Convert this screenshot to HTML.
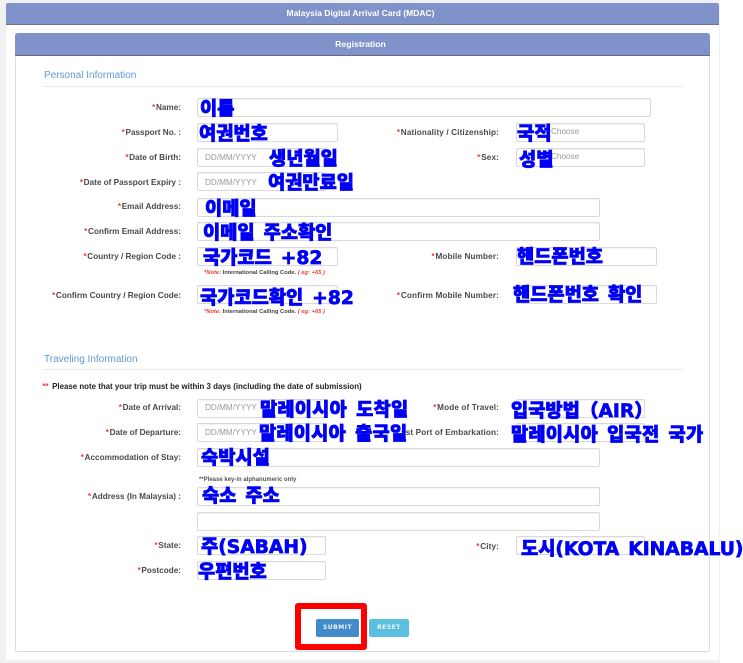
<!DOCTYPE html>
<html lang="ko"><head><meta charset="utf-8"><title>MDAC</title>
<style>
*{box-sizing:border-box}
html,body{margin:0;padding:0;width:743px;height:663px;overflow:hidden;background:#fff}
body{font-family:"Liberation Sans","Noto Sans CJK KR",sans-serif;position:relative;filter:blur(.3px)}
div,span{position:absolute}
.bg{left:0;top:0;width:720px;height:663px;background:#f1f1f1}
.outer{left:6px;top:3px;width:713px;height:657px;background:#fff}
.h1{left:6px;top:3px;width:713px;height:22px;background:#7f92ca;border-bottom:1px solid #6d7482;color:#fff;font:bold 8.5px/21px "Liberation Sans",sans-serif;text-align:center;border-radius:2px 2px 0 0;padding-right:4px}
.inner{left:15px;top:33px;width:695px;height:619px;background:#fff;border:1px solid #ddd;border-top:0;border-radius:2px}
.h2{left:15px;top:33px;width:695px;height:23px;background:#7f92ca;border-bottom:1px solid #666c78;color:#fff;font:bold 8.7px/22px "Liberation Sans",sans-serif;text-align:center;border-radius:3px 3px 0 0;padding-right:4px}
.sec{left:44px;color:#5f9bd4;font:10px/14px "Liberation Sans",sans-serif;white-space:nowrap}
.hr{left:44px;width:639px;height:1px;background:#e8e8e8}
.i{background:#fff;border:1px solid #d9d9d9;border-radius:2px;height:19px;box-shadow:inset 0 1px 1px rgba(0,0,0,.05)}
.ph{color:#9a9a9a;font:8.2px/12px "Liberation Sans",sans-serif;white-space:nowrap}
.l{color:#4a4a4a;font:bold 8.2px/12px "Liberation Sans",sans-serif;white-space:nowrap;text-align:right;letter-spacing:.12px}
.l b{color:#e9413e;font-style:italic;margin-right:1px}
.ll{letter-spacing:0}
.n{left:204px;font:bold 5.8px/8px "Liberation Sans",sans-serif;color:#444;white-space:nowrap}
.n i{color:#e9413e}
.k{color:#0000f5;font:900 18.7px/20px "DejaVu Sans","Noto Sans CJK KR",sans-serif;white-space:nowrap;-webkit-text-stroke:.7px #0000f5;word-spacing:2.5px;margin-top:3px}
.ks{letter-spacing:.2px}
.btn{top:619px;height:18px;border-radius:2px;color:#eef4fa;font:bold 6px/18px "DejaVu Sans",sans-serif;text-align:center;letter-spacing:.5px}
.red{left:295px;top:603px;width:72px;height:47px;border:6px solid #f00;border-radius:3px}
</style></head><body>
<div class="bg"></div><div class="outer"></div>
<div class="h1">Malaysia Digital Arrival Card (MDAC)</div>
<div class="inner"></div>
<div class="h2">Registration</div>

<div class="sec" style="top:69px">Personal Information</div>
<div class="hr" style="top:86px"></div>
<div class="sec" style="top:353px">Traveling Information</div>
<div class="hr" style="top:369px"></div>

<div class="i" style="left:197px;top:98px;width:454px"></div>
<div class="i" style="left:197px;top:123px;width:141px"></div>
<div class="i" style="left:197px;top:148px;width:129px"></div>
<div class="i" style="left:197px;top:172px;width:129px"></div>
<div class="i" style="left:197px;top:198px;width:403px"></div>
<div class="i" style="left:197px;top:222px;width:403px"></div>
<div class="i" style="left:197px;top:247px;width:141px"></div>
<div class="i" style="left:197px;top:285px;width:141px"></div>
<div class="i" style="left:197px;top:399px;width:129px"></div>
<div class="i" style="left:197px;top:423px;width:129px"></div>
<div class="i" style="left:197px;top:448px;width:403px"></div>
<div class="i" style="left:197px;top:487px;width:403px"></div>
<div class="i" style="left:197px;top:512px;width:403px"></div>
<div class="i" style="left:197px;top:536px;width:129px"></div>
<div class="i" style="left:197px;top:561px;width:129px"></div>
<div class="i" style="left:516px;top:123px;width:129px"></div>
<div class="i" style="left:516px;top:148px;width:129px"></div>
<div class="i" style="left:516px;top:247px;width:141px"></div>
<div class="i" style="left:516px;top:285px;width:141px"></div>
<div class="i" style="left:516px;top:399px;width:129px"></div>
<div class="i" style="left:516px;top:423px;width:129px"></div>
<div class="i" style="left:516px;top:536px;width:129px"></div>

<span class="ph" style="left:205px;top:152px">DD/MM/YYYY</span>
<span class="ph" style="left:205px;top:177px">DD/MM/YYYY</span>
<span class="ph" style="left:205px;top:402px">DD/MM/YYYY</span>
<span class="ph" style="left:205px;top:427px">DD/MM/YYYY</span>
<span class="ph" style="left:551px;top:126px">Choose</span>
<span class="ph" style="left:551px;top:151px">Choose</span>

<span class="l ll" style="right:562px;top:102px"><b>*</b>Name:</span>
<span class="l ll" style="right:562px;top:127px"><b>*</b>Passport No. :</span>
<span class="l ll" style="right:562px;top:152px"><b>*</b>Date of Birth:</span>
<span class="l ll" style="right:562px;top:177px"><b>*</b>Date of Passport Expiry :</span>
<span class="l ll" style="right:562px;top:201px"><b>*</b>Email Address:</span>
<span class="l ll" style="right:562px;top:226px"><b>*</b>Confirm Email Address:</span>
<span class="l ll" style="right:562px;top:251px"><b>*</b>Country / Region Code :</span>
<span class="l ll" style="right:562px;top:290px"><b>*</b>Confirm Country / Region Code:</span>
<span class="l ll" style="right:562px;top:402px"><b>*</b>Date of Arrival:</span>
<span class="l ll" style="right:562px;top:427px"><b>*</b>Date of Departure:</span>
<span class="l ll" style="right:562px;top:452px"><b>*</b>Accommodation of Stay:</span>
<span class="l ll" style="right:562px;top:491px"><b>*</b>Address (In Malaysia) :</span>
<span class="l ll" style="right:562px;top:540px"><b>*</b>State:</span>
<span class="l ll" style="right:562px;top:565px"><b>*</b>Postcode:</span>
<span class="l" style="right:244px;top:127px"><b>*</b>Nationality / Citizenship:</span>
<span class="l" style="right:244px;top:152px"><b>*</b>Sex:</span>
<span class="l" style="right:244px;top:251px"><b>*</b>Mobile Number:</span>
<span class="l" style="right:244px;top:290px"><b>*</b>Confirm Mobile Number:</span>
<span class="l" style="right:244px;top:402px"><b>*</b>Mode of Travel:</span>
<span class="l" style="right:244px;top:427px">Last Port of Embarkation:</span>
<span class="l" style="right:244px;top:541px"><b>*</b>City:</span>

<span class="n" style="top:269px"><i>*Note:</i> International Calling Code. <i>( eg: +65 )</i></span>
<span class="n" style="top:308px"><i>*Note:</i> International Calling Code. <i>( eg: +65 )</i></span>
<span class="n" style="left:199px;top:476px;color:#555;font-size:6px">**Please key-in alphanumeric only</span>
<span style="left:42px;top:381px;font:bold 7.9px/12px 'Liberation Sans',sans-serif;color:#222;white-space:nowrap"><i style="color:#e9413e;margin-right:4px">**</i>Please note that your trip must be within 3 days (including the date of submission)</span>

<span class="k" style="left:200px;top:97px">이름</span>
<span class="k" style="left:199px;top:122px">여권번호</span>
<span class="k" style="left:269px;top:147px">생년월일</span>
<span class="k" style="left:268px;top:171px">여권만료일</span>
<span class="k" style="left:205px;top:197px">이메일</span>
<span class="k" style="left:203px;top:221px">이메일 주소확인</span>
<span class="k" style="left:203px;top:246px">국가코드 +82</span>
<span class="k" style="left:200px;top:286px">국가코드확인 +82</span>
<span class="k" style="left:517px;top:122px">국적</span>
<span class="k" style="left:519px;top:148px">성별</span>
<span class="k" style="left:517px;top:245px">핸드폰번호</span>
<span class="k" style="left:513px;top:283px">핸드폰번호 확인</span>
<span class="k ks" style="left:260px;top:398px">말레이시아 도착일</span>
<span class="k ks" style="left:259px;top:422px">말레이시아 출국일</span>
<span class="k" style="left:511px;top:399px">입국방법（AIR）</span>
<span class="k ks" style="left:511px;top:423px">말레이시아 입국전 국가</span>
<span class="k" style="left:201px;top:446px">숙박시설</span>
<span class="k" style="left:202px;top:484px">숙소 주소</span>
<span class="k" style="left:201px;top:535px">주(SABAH)</span>
<span class="k" style="left:198px;top:560px">우편번호</span>
<span class="k" style="left:521px;top:537px">도시(KOTA KINABALU)</span>

<div class="btn" style="left:316px;width:43px;background:#428bca">SUBMIT</div>
<div class="btn" style="left:369px;width:40px;background:#5bc0de">RESET</div>
<div class="red"></div>
</body></html>
